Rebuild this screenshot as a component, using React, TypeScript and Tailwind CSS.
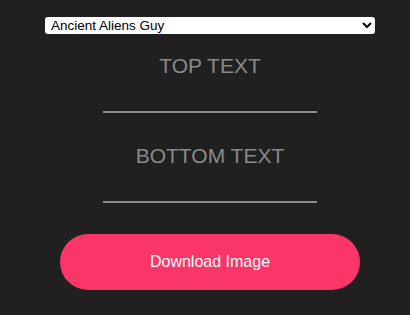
import { useState } from "react"

const memes = ["Ancient Aliens Guy", "Distracted Boyfriend", "Drake Hotline Bling", "One Does Not Simply"]

export default function App() {
    const [meme, setMeme] = useState(memes[0])
    const [top, setTop] = useState("")
    const [bottom, setBottom] = useState("")

    return (
        <main className="flex min-h-screen flex-col items-center bg-[#202020] pl-[10px] font-['Liberation_Sans',Arial,sans-serif]">
            <select
                value={meme}
                onChange={(e) => setMeme(e.target.value)}
                className="mt-[17px] h-[17px] w-[330px] rounded-[3px] bg-white pl-[2px] text-[13.5px] leading-[15px] text-black"
            >
                {memes.map((m) => (
                    <option key={m}>{m}</option>
                ))}
            </select>

            <input
                value={top}
                onChange={(e) => setTop(e.target.value)}
                placeholder="TOP TEXT"
                className="mt-[11px] w-[214px] border-b-2 border-[#8c8c8c] bg-transparent pt-[9px] pb-[33px] text-center text-[21px] leading-6 text-white outline-none placeholder:text-[#8a8a8a]"
            />
            <input
                value={bottom}
                onChange={(e) => setBottom(e.target.value)}
                placeholder="BOTTOM TEXT"
                className="mt-[22px] w-[214px] border-b-2 border-[#8c8c8c] bg-transparent pt-[9px] pb-[33px] text-center text-[21px] leading-6 text-white outline-none placeholder:text-[#8a8a8a]"
            />

            <button className="mt-[31px] h-[56px] w-[300px] rounded-full bg-[#fa3568] text-[16px] text-white">
                Download Image
            </button>
        </main>
    )
}
